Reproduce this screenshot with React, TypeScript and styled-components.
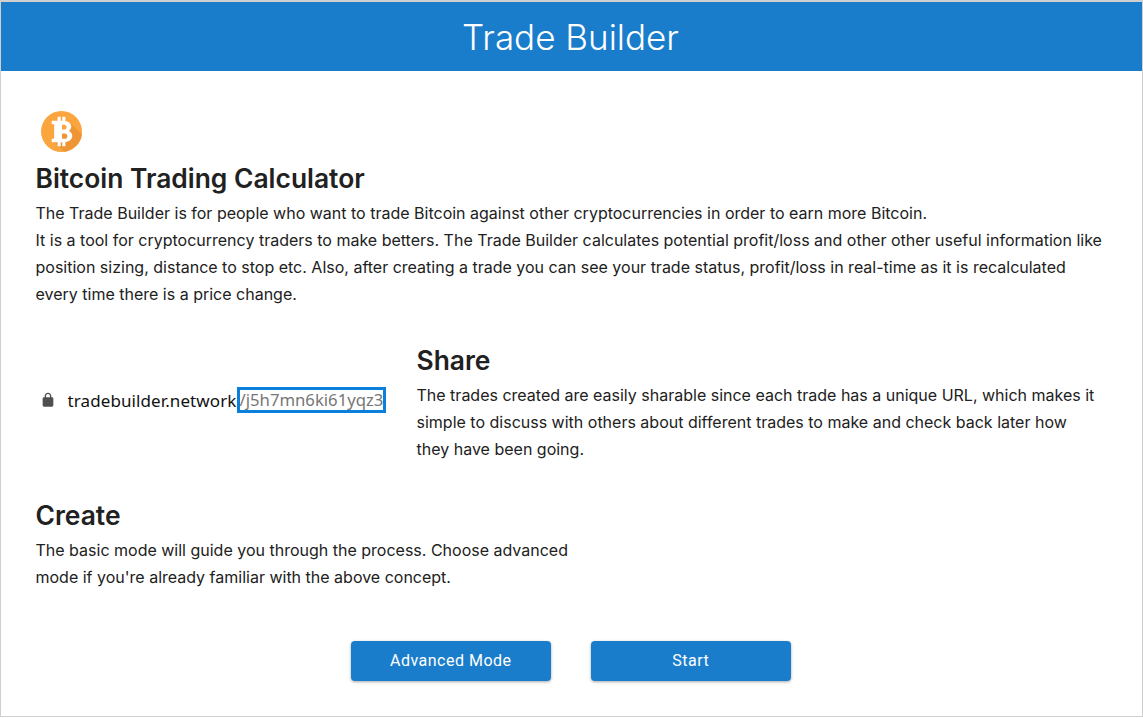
import { createGlobalStyle, styled } from "styled-components";

const GlobalStyle = createGlobalStyle`
  html, body {
    margin: 0;
    padding: 0;
    background: #fff;
  }
`;

function BitcoinLogo() {
  return (
    <svg width="41" height="41" viewBox="0 0 42 42">
      <circle cx="21" cy="21" r="21" fill="#fba53e" />
      <path d="M30 12 L42 24 A21 21 0 0 1 24 41.800 L13 31 Z" fill="#ee9535" />
      <path
        fillRule="evenodd"
        fill="#fff"
        d="M11 10h6V6h3.200v4h1.600V6H25v4.300c3.800.6 6 2.700 6 5.700 0 2-1 3.500-2.600 4.400 2.400.8 3.600 2.700 3.600 5.100 0 3.400-2.600 5.700-7 6.200V36h-3.200v-4h-1.600v4H17v-4h-6v-3.500h2.500v-15H11V10zm10.500 4v5h2.300c1.500 0 2.400-1 2.400-2.500s-.9-2.500-2.400-2.500h-2.300zm0 9v5.500h2.800c1.700 0 2.700-1.100 2.700-2.750S26 23 24.300 23h-2.800z"
      />
    </svg>
  );
}

function LockIcon() {
  return (
    <svg width="16" height="16" viewBox="0 0 24 24" fill="#505050">
      <path d="M18 8h-1V6c0-2.760-2.240-5-5-5S7 3.240 7 6v2H6c-1.100 0-2 .9-2 2v10c0 1.100.9 2 2 2h12c1.100 0 2-.9 2-2V10c0-1.100-.9-2-2-2zM9.100 8V6c0-1.710 1.190-2.900 2.900-2.900s2.900 1.190 2.900 2.900v2H9.100z" />
    </svg>
  );
}

export default function App() {
  return (
    <>
      <GlobalStyle />
      <Frame>
        <Header>Trade Builder</Header>
        <Main>
          <LogoWrap>
            <BitcoinLogo />
          </LogoWrap>
          <Heading>Bitcoin Trading Calculator</Heading>
          <Paragraph>
            The Trade Builder is for people who want to trade Bitcoin against
            other cryptocurrencies in order to earn more Bitcoin.
            <br />
            It is a tool for cryptocurrency traders to make betters. The Trade
            Builder calculates potential profit/loss and other other useful
            information like position sizing, distance to stop etc. Also, after
            creating a trade you can see your trade status, profit/loss in
            real-time as it is recalculated every time there is a price change.
          </Paragraph>
          <ShareRow>
            <UrlBar>
              <LockIcon />
              <Domain>tradebuilder.network</Domain>
              <Slug>/j5h7mn6ki61yqz3</Slug>
            </UrlBar>
            <ShareText>
              <Heading>Share</Heading>
              <Paragraph>
                The trades created are easily sharable since each trade has a
                unique URL, which makes it simple to discuss with others about
                different trades to make and check back later how they have been
                going.
              </Paragraph>
            </ShareText>
          </ShareRow>
          <CreateBlock>
            <Heading>Create</Heading>
            <Paragraph>
              The basic mode will guide you through the process. Choose advanced
              mode if you're already familiar with the above concept.
            </Paragraph>
          </CreateBlock>
          <Actions>
            <ActionButton>Advanced Mode</ActionButton>
            <ActionButton>Start</ActionButton>
          </Actions>
        </Main>
      </Frame>
    </>
  );
}

const Frame = styled.div`
  box-sizing: border-box;
  width: 1143px;
  height: 717px;
  border: 1px solid #cfcfcf;
  border-top-width: 2px;
  font-family: Inter, "Liberation Sans", sans-serif;
  color: #212121;
  overflow: hidden;
`;

const Header = styled.header`
  height: 69px;
  padding-right: 2px;
  background: #1a7dcc;
  color: #fff;
  font-family: Inter, sans-serif;
  font-weight: 300;
  font-size: 35px;
  line-height: 70px;
  text-align: center;
`;

const Main = styled.main`
  padding: 40px 35px 0 34.5px;
`;

const LogoWrap = styled.div`
  height: 42px;
  padding-left: 5px;
`;

const Heading = styled.h2`
  margin: 0 0 4px;
  font-size: 26.4px;
  line-height: 36px;
  font-weight: 610;
  color: #212121;
  padding-top: 7px;
`;

const Paragraph = styled.p`
  margin: 0;
  font-size: 16px;
  line-height: 27px;
`;

const ShareRow = styled.section`
  display: grid;
  grid-template-columns: 381px 1fr;
  align-items: center;
  margin-top: 27px;
`;

const ShareText = styled.div`
  max-width: 680px;
`;

const UrlBar = styled.div`
  display: flex;
  align-items: center;
  padding-left: 4px;
  margin-top: 2px;
`;

const Domain = styled.span`
  margin-left: 12px;
  font-family: "Noto Sans", sans-serif;
  font-size: 17px;
  letter-spacing: 0.1px;
  color: #111;
`;

const Slug = styled.span`
  border: 3px solid #0a80dc;
  font-family: "Noto Sans", sans-serif;
  font-size: 16.7px;
  line-height: 20px;
  color: #777;
`;

const CreateBlock = styled.section`
  width: 560px;
  margin-top: 27px;
`;

const Actions = styled.div`
  display: flex;
  justify-content: center;
  gap: 40px;
  margin-top: 50px;
`;

const ActionButton = styled.button`
  width: 200px;
  height: 40px;
  padding: 0 1px 2px 0;
  border: 0;
  border-radius: 4px;
  background: #1a7dcc;
  color: #fff;
  font-family: Roboto, sans-serif;
  font-size: 16px;
  letter-spacing: 0.5px;
  box-shadow: 0 1px 3px rgba(0, 0, 0, 0.35);
`;
